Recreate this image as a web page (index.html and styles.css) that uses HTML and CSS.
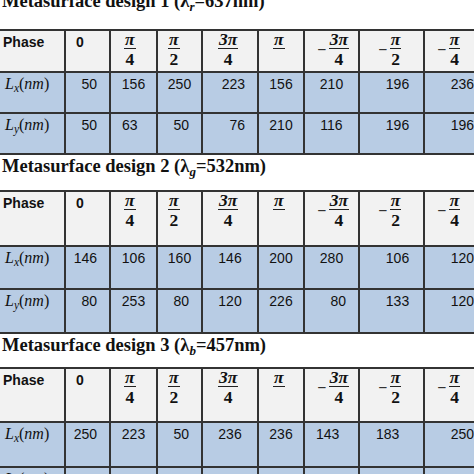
FILE: index.html
```html
<!DOCTYPE html>
<html>
<head>
<meta charset="utf-8">
<link rel="stylesheet" href="styles.css">
</head>
<body>
<div class="page">
  <div class="title first">Metasurface design 1 (λ<sub>r</sub>=637nm)</div>
  <table class="grid t1">
    <colgroup><col class="w1"><col class="w2"><col class="w3"><col class="w4"><col class="w5"><col class="w6"><col class="w7"><col class="w8"><col class="w9"></colgroup>
    <tr class="hd">
      <th class="ph">Phase</th>
      <th class="zero">0</th>
      <th><span class="frac"><span class="num">π</span><span class="den">4</span></span></th>
      <th class="p11"><span class="frac"><span class="num">π</span><span class="den">2</span></span></th>
      <th class="p16"><span class="frac"><span class="num">3π</span><span class="den">4</span></span></th>
      <th class="p15"><span class="frac"><span class="num">π</span></span></th>
      <th class="p12"><span class="ng"><span class="neg">−</span><span class="frac"><span class="num">3π</span><span class="den">4</span></span></span></th>
      <th class="p18"><span class="ng"><span class="neg">−</span><span class="frac"><span class="num">π</span><span class="den">2</span></span></span></th>
      <th class="p12"><span class="ng"><span class="neg">−</span><span class="frac"><span class="num">π</span><span class="den">4</span></span></span></th>
    </tr>
    <tr class="r1">
      <td class="lab"><i>L</i><sub>x</sub>(<i>nm</i>)</td>
      <td class="r">50</td><td class="c">156</td><td class="c">250</td><td class="r">223</td><td class="c">156</td><td class="c">210</td><td class="cr">196</td><td class="rl">236</td>
    </tr>
    <tr class="r2">
      <td class="lab"><i>L</i><sub>y</sub>(<i>nm</i>)</td>
      <td class="r">50</td><td class="l">63</td><td class="r">50</td><td class="r">76</td><td class="c">210</td><td class="c">116</td><td class="cr">196</td><td class="rl">196</td>
    </tr>
  </table>

  <div class="title">Metasurface design 2 (λ<sub>g</sub>=532nm)</div>
  <table class="grid t2">
    <colgroup><col class="w1"><col class="w2"><col class="w3"><col class="w4"><col class="w5"><col class="w6"><col class="w7"><col class="w8"><col class="w9"></colgroup>
    <tr class="hd">
      <th class="ph">Phase</th>
      <th class="zero">0</th>
      <th><span class="frac"><span class="num">π</span><span class="den">4</span></span></th>
      <th class="p11"><span class="frac"><span class="num">π</span><span class="den">2</span></span></th>
      <th class="p16"><span class="frac"><span class="num">3π</span><span class="den">4</span></span></th>
      <th class="p15"><span class="frac"><span class="num">π</span></span></th>
      <th class="p12"><span class="ng"><span class="neg">−</span><span class="frac"><span class="num">3π</span><span class="den">4</span></span></span></th>
      <th class="p18"><span class="ng"><span class="neg">−</span><span class="frac"><span class="num">π</span><span class="den">2</span></span></span></th>
      <th class="p12"><span class="ng"><span class="neg">−</span><span class="frac"><span class="num">π</span><span class="den">4</span></span></span></th>
    </tr>
    <tr class="r1">
      <td class="lab"><i>L</i><sub>x</sub>(<i>nm</i>)</td>
      <td class="r">146</td><td class="c">106</td><td class="c">160</td><td class="c">146</td><td class="c">200</td><td class="c">280</td><td class="cr">106</td><td class="rl">120</td>
    </tr>
    <tr class="r2">
      <td class="lab"><i>L</i><sub>y</sub>(<i>nm</i>)</td>
      <td class="r">80</td><td class="c">253</td><td class="r">80</td><td class="c">120</td><td class="c">226</td><td class="r">80</td><td class="cr">133</td><td class="rl">120</td>
    </tr>
  </table>

  <div class="title third">Metasurface design 3 (λ<sub>b</sub>=457nm)</div>
  <table class="grid t3">
    <colgroup><col class="w1"><col class="w2"><col class="w3"><col class="w4"><col class="w5"><col class="w6"><col class="w7"><col class="w8"><col class="w9"></colgroup>
    <tr class="hd">
      <th class="ph">Phase</th>
      <th class="zero">0</th>
      <th><span class="frac"><span class="num">π</span><span class="den">4</span></span></th>
      <th class="p11"><span class="frac"><span class="num">π</span><span class="den">2</span></span></th>
      <th class="p16"><span class="frac"><span class="num">3π</span><span class="den">4</span></span></th>
      <th class="p15"><span class="frac"><span class="num">π</span></span></th>
      <th class="p12"><span class="ng"><span class="neg">−</span><span class="frac"><span class="num">3π</span><span class="den">4</span></span></span></th>
      <th class="p18"><span class="ng"><span class="neg">−</span><span class="frac"><span class="num">π</span><span class="den">2</span></span></span></th>
      <th class="p12"><span class="ng"><span class="neg">−</span><span class="frac"><span class="num">π</span><span class="den">4</span></span></span></th>
    </tr>
    <tr class="r1">
      <td class="lab"><i>L</i><sub>x</sub>(<i>nm</i>)</td>
      <td class="r">250</td><td class="c">223</td><td class="r">50</td><td class="c">236</td><td class="c">236</td><td class="l">143</td><td class="l16">183</td><td class="rl">250</td>
    </tr>
    <tr class="r2">
      <td class="lab"><i>L</i><sub>y</sub>(<i>nm</i>)</td>
      <td class="r">60</td><td class="c">90</td><td class="r">60</td><td class="c">140</td><td class="c">220</td><td class="l">60</td><td class="cr">50</td><td class="rl">50</td>
    </tr>
  </table>
</div>
</body>
</html>
```

FILE: styles.css
```css
html, body {
  margin: 0;
  padding: 0;
}
body {
  width: 474px;
  height: 474px;
  overflow: hidden;
  background: #ffffff;
  color: #111111;
  font-family: "Liberation Sans", Arial, sans-serif;
}
.page {
  width: 474px;
}

/* section titles */
.title {
  box-sizing: border-box;
  height: 35px;
  padding: 1px 0 0 2px;
  font: bold 18.5px/20px "Liberation Serif", "Times New Roman", serif;
  white-space: nowrap;
  color: #111;
}
.title.first {
  height: 39px;
  margin-top: -10px;
}
.title.third {
  height: 33px;
}
.title sub {
  font-style: italic;
  font-size: 13px;
  line-height: 0;
  vertical-align: -4px;
}

/* tables */
.grid {
  border-collapse: collapse;
  table-layout: fixed;
  width: 497px;
  margin-left: -4px;
}
.w1 { width: 68px; }
.w2 { width: 45px; }
.w3 { width: 47px; }
.w4 { width: 45px; }
.w5 { width: 56px; }
.w6 { width: 46px; }
.w7 { width: 55px; }
.w8 { width: 65px; }
.w9 { width: 70px; }

.grid th,
.grid td {
  border: 2px solid #333333;
  padding: 0;
  vertical-align: top;
  white-space: nowrap;
  overflow: hidden;
}
.grid th {
  background: #f2f2f2;
  text-align: left;
  font-weight: normal;
  padding-left: 13px;
  padding-top: 0;
}
.grid td {
  background: #b8cce4;
  font-size: 14px;
  line-height: 16px;
  padding-top: 3px;
}

.t1 .hd { height: 42px; }
.t1 .r1 { height: 41px; }
.t1 .r2 { height: 41px; }
.t2 .hd { height: 55px; }
.t2 .r1 { height: 43px; }
.t2 .r2 { height: 44px; }
.t3 .hd { height: 54px; }
.t3 .r1 { height: 45px; }
.t3 .r2 { height: 44px; }

/* header cells */
.grid th.ph,
.grid th.zero {
  font-family: "Liberation Sans", Arial, sans-serif;
  font-weight: bold;
  font-size: 14px;
  line-height: 16px;
  padding-top: 3px;
}
.grid th.ph { padding-left: 5px; }
.grid th.zero { padding-left: 10px; }
.grid th.p11 { padding-left: 10px; }
.grid th.p12 { padding-left: 11px; }
.grid th.p15 { padding-left: 14px; }
.grid th.p16 { padding-left: 15px; }
.grid th.p18 { padding-left: 17px; }

.frac {
  display: inline-flex;
  flex-direction: column;
  align-items: center;
  vertical-align: top;
  font-family: "Liberation Serif", "Times New Roman", serif;
  font-weight: bold;
  font-size: 17.5px;
  color: #111;
}
.num {
  line-height: 15px;
  padding: 1px 1px 1px;
  font-style: italic;
  border-bottom: 1.5px solid #222;
}
.den {
  line-height: 16px;
  padding-top: 2px;
}
.ng {
  display: inline-flex;
  align-items: center;
  gap: 1px;
}
.neg {
  font-family: "DejaVu Sans", sans-serif;
  font-size: 14px;
  line-height: 14px;
  color: #333;
  transform: scaleX(0.85);
}

/* data cells */
.grid td.lab {
  font-family: "Liberation Serif", "Times New Roman", serif;
  font-size: 16px;
  line-height: 16px;
  padding-left: 7px;
  padding-top: 3px;
}
.lab sub {
  font-style: italic;
  font-size: 11.5px;
  line-height: 0;
  vertical-align: -3px;
}
.grid td.r { text-align: right; padding-right: 12px; }
.grid td.c { text-align: center; }
.grid td.l { text-align: left; padding-left: 11px; }
.grid td.l16 { text-align: left; padding-left: 16px; }
.grid td.cr { text-align: center; padding-left: 12px; }
.grid td.rl { text-align: right; padding-right: 19px; }
```
